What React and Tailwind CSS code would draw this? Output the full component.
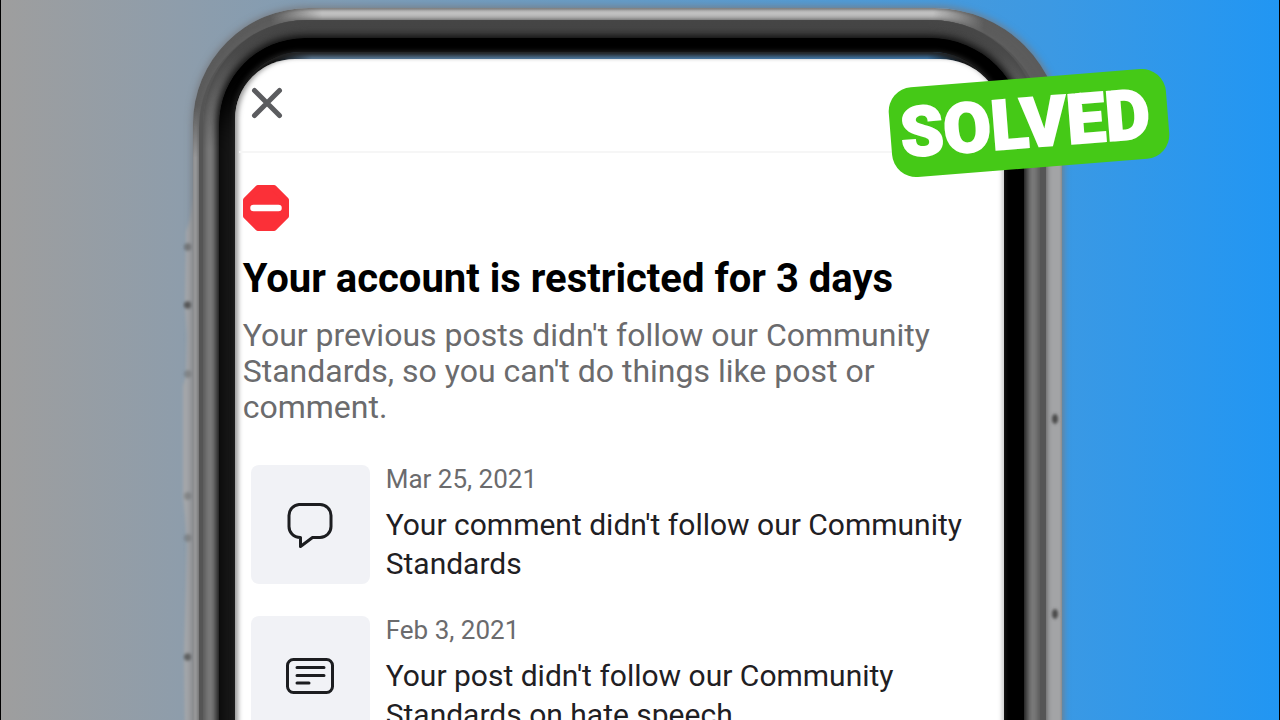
import React from "react";

const violations = [
  {
    date: "Mar 25, 2021",
    text: "Your comment didn't follow our Community Standards",
    icon: CommentIcon,
  },
  {
    date: "Feb 3, 2021",
    text: "Your post didn't follow our Community Standards on hate speech",
    icon: PostIcon,
  },
];

function CloseIcon() {
  return (
    <svg viewBox="0 0 32 32" className="size-8" fill="none" stroke="#5b5c5f" strokeWidth="5" strokeLinecap="round" aria-hidden="true">
      <path d="M3.5 3.5 28.5 28.5M28.5 3.5 3.5 28.5" />
    </svg>
  );
}

function StopIcon() {
  return (
    <svg viewBox="0 0 46 46" className="size-[46px]" aria-hidden="true">
      <path
        d="M15 3h16L43 15v16L31 43H15L3 31V15Z"
        fill="#fb3038"
        stroke="#fb3038"
        strokeWidth="6"
        strokeLinejoin="round"
      />
      <path d="M10.500 23h25" stroke="#fff" strokeWidth="6.500" strokeLinecap="round" />
    </svg>
  );
}

function CommentIcon() {
  return (
    <svg viewBox="0 0 48 48" className="size-12" fill="none" stroke="#1c1d20" strokeWidth="3" strokeLinejoin="round" aria-hidden="true">
      <path d="M13 3.500h21a11 11 0 0 1 11 11v11a11 11 0 0 1-11 11h-7.500L14.500 45.500v-9C7 36.500 3 31 3 25.500v-11a11 11 0 0 1 10-11Z" />
    </svg>
  );
}

function PostIcon() {
  return (
    <svg viewBox="0 0 48 48" className="size-12" fill="none" stroke="#1c1d20" strokeWidth="3" strokeLinecap="round" aria-hidden="true">
      <rect x="1.500" y="7.500" width="45" height="33" rx="6" />
      <path d="M11 15.500h27M11 23.500h27M11 31h12" />
    </svg>
  );
}

function LeftKeys() {
  return (
    <svg viewBox="0 0 16 720" className="h-[720px] w-4 justify-self-end overflow-visible" aria-hidden="true">
      <defs>
        <filter id="soft-left" x="-100%" y="-5%" width="300%" height="110%">
          <feGaussianBlur stdDeviation="1.8" />
        </filter>
      </defs>
      <g filter="url(#soft-left)">
        <path d="M20 180l-7 40-4 12v14L8 306l2 30-1 40-3 10v110l2 20 2 30-1 40-2 70 1 80h14Z" fill="#a6a8ab" />
        <g fill="#555">
          <circle cx="11" cy="247" r="4" opacity="0.6" />
          <circle cx="11" cy="305" r="4" />
          <circle cx="11" cy="374" r="4" opacity="0.4" />
          <circle cx="11" cy="496" r="4" opacity="0.4" />
          <circle cx="11" cy="538" r="4" opacity="0.4" />
          <circle cx="11" cy="657" r="4" opacity="0.9" />
        </g>
      </g>
    </svg>
  );
}

function RightKeys() {
  return (
    <svg viewBox="0 0 16 720" className="z-10 -ml-4 h-[720px] w-4" aria-hidden="true">
      <defs>
        <filter id="soft-right" x="-100%" y="-50%" width="300%" height="200%">
          <feGaussianBlur stdDeviation="1.8" />
        </filter>
      </defs>
      <g filter="url(#soft-right)" fill="#4a4a4a">
        <ellipse cx="9" cy="419" rx="3" ry="5" />
        <ellipse cx="9" cy="614" rx="3" ry="5" />
      </g>
    </svg>
  );
}

function Screen() {
  return (
    <main className="min-h-[900px] rounded-tl-[60px] rounded-tr-[64px] bg-white shadow-[inset_5px_0_5px_-2px_rgba(80,80,80,0.6),inset_-4px_0_4px_-2px_rgba(120,120,120,0.4)]">
      <div className="mx-1 border-b-2 border-[#f6f6f6] px-3 pt-7 pb-8">
        <button type="button" aria-label="Close" className="block">
          <CloseIcon />
        </button>
      </div>
      <section className="px-2 pt-8">
        <StopIcon />
        <h1 className="mt-[25px] text-[40px] leading-[46px] font-bold text-black">
          Your account is restricted for 3 days
        </h1>
        <p className="mt-[15px] max-w-[700px] text-[32px] leading-9 text-[#6b6b6d]">
          Your previous posts didn't follow our Community Standards, so you can't do things like post or comment.
        </p>
        <ul className="mt-10 flex flex-col gap-8 pl-2">
          {violations.map(({ date, text, icon: Icon }) => (
            <li key={date} className="flex gap-4">
              <div className="flex size-[119px] shrink-0 items-center justify-center rounded-lg bg-[#f1f2f6]">
                <Icon />
              </div>
              <div className="max-w-[600px]">
                <p className="text-[26px] leading-7 text-[#6b6b6d]">{date}</p>
                <p className="mt-3 text-[30px] leading-[39px] text-[#1f2023]">{text}</p>
              </div>
            </li>
          ))}
        </ul>
      </section>
    </main>
  );
}

export default function App() {
  return (
    <div className="h-screen overflow-hidden border-x border-black bg-[linear-gradient(90deg,#9e9e9e_0%,#8e9dab_14%,#3c99e3_82%,#2196f3_100%)] font-['Roboto',sans-serif]">
      <div className="grid grid-cols-[15fr_68fr_17fr] items-start">
        <LeftKeys />
        <div className="relative mt-2">
          <div className="rounded-tl-[116px] rounded-tr-[128px] bg-[radial-gradient(circle_130px_at_0_20px,#5c5c5c_60%,transparent),radial-gradient(circle_130px_at_100%_20px,#5c5c5c_60%,transparent),linear-gradient(180deg,#c4c4c4_0px,#a3a4a6_60px)] pt-3 pr-4 pl-1.5 shadow-[0_0_6px_2px_rgba(120,123,127,0.8),inset_0_2px_3px_rgba(90,90,90,0.7)]">
            <div className="rounded-tl-[108px] rounded-tr-[116px] bg-[#555] pr-1.5 pl-1 shadow-[0_0_5px_1px_#606060]">
              <div className="rounded-tl-[104px] rounded-tr-[110px] bg-[linear-gradient(180deg,#444_0px,#4a4a4a_30px,#858585_130px)] pt-[18px] pr-4 pl-4 shadow-[inset_0_0_8px_2px_#484848]">
                <div className="rounded-tl-[86px] rounded-tr-[94px] bg-[linear-gradient(90deg,#1a1a1a_50%,#000_50%)] pt-3.5 pr-5 pl-4 shadow-[inset_0_30px_20px_#000,0_0_7px_3px_#111]">
                  <div className="rounded-tl-[66px] rounded-tr-[72px] bg-[linear-gradient(90deg,#000_5%,#5f7f9c_10%,#3f7db3_90%,#000_95%)] pt-[7px] shadow-[inset_0_4px_4px_#222,0_0_5px_1px_#222]">
                    <Screen />
                  </div>
                </div>
              </div>
            </div>
          </div>
          <div className="absolute top-[70px] -right-[106px] z-20 flex h-[90px] w-[278px] -rotate-[4.500deg] items-center justify-center rounded-[24px] bg-[#45c917] pr-2">
            <strong className="text-[69px] leading-none font-black text-white [-webkit-text-stroke:2px_white]">
              SOLVED
            </strong>
          </div>
        </div>
        <RightKeys />
      </div>
    </div>
  );
}
